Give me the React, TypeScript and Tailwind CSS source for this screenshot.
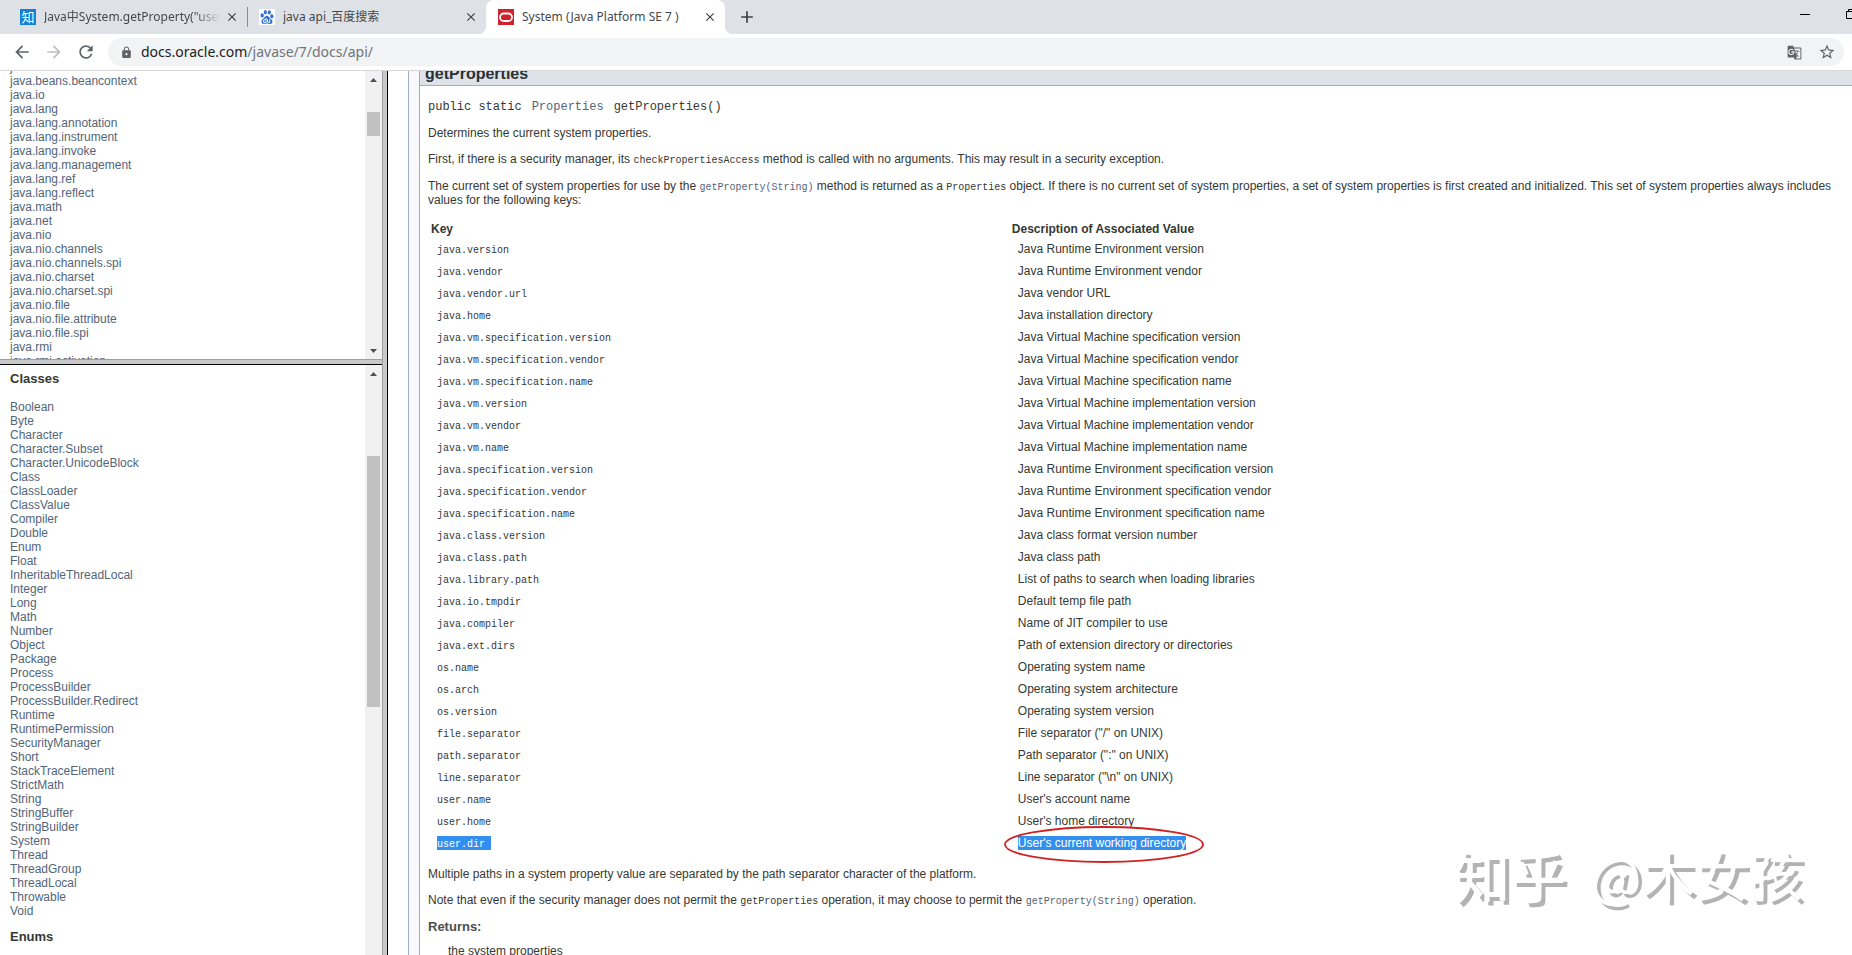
import React from 'react'
import { MdAdd, MdArrowBack, MdArrowForward, MdClose, MdGTranslate, MdLock, MdRefresh, MdStarBorder } from 'react-icons/md'
import { SiBaidu } from 'react-icons/si'

const packages = [
    'java.beans', 'java.beans.beancontext', 'java.io', 'java.lang', 'java.lang.annotation', 'java.lang.instrument',
    'java.lang.invoke', 'java.lang.management', 'java.lang.ref', 'java.lang.reflect', 'java.math', 'java.net',
    'java.nio', 'java.nio.channels', 'java.nio.channels.spi', 'java.nio.charset', 'java.nio.charset.spi',
    'java.nio.file', 'java.nio.file.attribute', 'java.nio.file.spi', 'java.rmi', 'java.rmi.activation',
]

const classes = [
    'Boolean', 'Byte', 'Character', 'Character.Subset', 'Character.UnicodeBlock', 'Class', 'ClassLoader', 'ClassValue',
    'Compiler', 'Double', 'Enum', 'Float', 'InheritableThreadLocal', 'Integer', 'Long', 'Math', 'Number', 'Object',
    'Package', 'Process', 'ProcessBuilder', 'ProcessBuilder.Redirect', 'Runtime', 'RuntimePermission',
    'SecurityManager', 'Short', 'StackTraceElement', 'StrictMath', 'String', 'StringBuffer', 'StringBuilder',
    'System', 'Thread', 'ThreadGroup', 'ThreadLocal', 'Throwable', 'Void',
]

const properties = [
    ['java.version', 'Java Runtime Environment version'],
    ['java.vendor', 'Java Runtime Environment vendor'],
    ['java.vendor.url', 'Java vendor URL'],
    ['java.home', 'Java installation directory'],
    ['java.vm.specification.version', 'Java Virtual Machine specification version'],
    ['java.vm.specification.vendor', 'Java Virtual Machine specification vendor'],
    ['java.vm.specification.name', 'Java Virtual Machine specification name'],
    ['java.vm.version', 'Java Virtual Machine implementation version'],
    ['java.vm.vendor', 'Java Virtual Machine implementation vendor'],
    ['java.vm.name', 'Java Virtual Machine implementation name'],
    ['java.specification.version', 'Java Runtime Environment specification version'],
    ['java.specification.vendor', 'Java Runtime Environment specification vendor'],
    ['java.specification.name', 'Java Runtime Environment specification name'],
    ['java.class.version', 'Java class format version number'],
    ['java.class.path', 'Java class path'],
    ['java.library.path', 'List of paths to search when loading libraries'],
    ['java.io.tmpdir', 'Default temp file path'],
    ['java.compiler', 'Name of JIT compiler to use'],
    ['java.ext.dirs', 'Path of extension directory or directories'],
    ['os.name', 'Operating system name'],
    ['os.arch', 'Operating system architecture'],
    ['os.version', 'Operating system version'],
    ['file.separator', 'File separator ("/" on UNIX)'],
    ['path.separator', 'Path separator (":" on UNIX)'],
    ['line.separator', 'Line separator ("\\n" on UNIX)'],
    ['user.name', "User's account name"],
    ['user.home', "User's home directory"],
]

const Code = ({ children }: { children: React.ReactNode }) => (
    <code className="font-['Liberation_Mono',monospace] text-[10px] leading-none">{children}</code>
)

const Tab = ({ icon, title, active }: { icon: React.ReactNode; title: string; active?: boolean }) => (
    <div className={active ? 'relative flex w-[239px] items-center rounded-t-lg bg-white pr-2 pl-3' : 'flex w-[239px] items-center pr-2 pl-3'}>
        {active && (
            <>
                <span className="absolute bottom-0 -left-2 size-2 bg-[radial-gradient(circle_at_0_0,#dee1e6_8px,white_8px)]" />
                <span className="absolute -right-2 bottom-0 size-2 bg-[radial-gradient(circle_at_100%_0,#dee1e6_8px,white_8px)]" />
            </>
        )}
        {icon}
        <a
            href="#"
            className={
                title.length > 26 && !active
                    ? 'ml-2 min-w-0 flex-1 overflow-hidden whitespace-nowrap [mask-image:linear-gradient(to_right,black_85%,transparent)]'
                    : 'ml-2 min-w-0 flex-1 overflow-hidden whitespace-nowrap'
            }
        >
            {title}
        </a>
        <button aria-label="Close tab" className="ml-1 text-[#3c4043]"><MdClose size={14} /></button>
    </div>
)

const Scrollbar = ({ thumb, down }: { thumb: string; down?: boolean }) => (
    <div className="flex w-[17px] shrink-0 flex-col items-center bg-[#f1f1f1]">
        <div className="flex h-[17px] shrink-0 items-center">
            <svg width="7" height="4" viewBox="0 0 7 4"><path d="M0 4 3.5 0 7 4z" fill="#505050" /></svg>
        </div>
        <div className={thumb} />
        {down && (
            <div className="mt-auto flex h-[17px] shrink-0 items-center">
                <svg width="7" height="4" viewBox="0 0 7 4"><path d="M0 0 3.5 4 7 0z" fill="#505050" /></svg>
            </div>
        )}
    </div>
)

const LinkList = ({ items }: { items: string[] }) => (
    <ul>
        {items.map((item) => (
            <li key={item}><a href="#" className="text-[#526579]">{item}</a></li>
        ))}
    </ul>
)

const Browser = () => (
    <header className="shrink-0 border-b border-[#d5d7da] bg-white font-['Noto_Sans','Noto_Sans_CJK_SC',sans-serif] text-[#45494d]">
        <div className="flex h-[34px] overflow-hidden bg-[#dee1e6] pl-2 text-xs">
            <Tab
                title={'Java中System.getProperty("user.dir")'}
                icon={<span className="flex size-4 shrink-0 items-center justify-center bg-[#1480d8] text-[13px] leading-4 text-white">知</span>}
            />
            <div className="my-auto -mr-px h-5 w-px bg-[#8a8d91]" />
            <Tab
                title="java api_百度搜索"
                icon={<span className="flex size-4 shrink-0 items-center justify-center bg-white text-[#2f6fd6]"><SiBaidu size={14} /></span>}
            />
            <Tab
                active
                title="System (Java Platform SE 7 )"
                icon={
                    <svg className="size-4 shrink-0" viewBox="0 0 16 16">
                        <path d="M0 0h16v16H0z" fill="#d3202f" />
                        <rect x="2" y="4.5" width="12" height="7.5" rx="3.75" fill="none" stroke="#fff" strokeWidth="1.8" />
                    </svg>
                }
            />
            <button aria-label="New tab" className="ml-3 text-[#3c4043]"><MdAdd size={20} /></button>
            <div className="ml-auto flex shrink-0">
                <button aria-label="Minimize" className="flex h-[29px] w-[46px] items-center text-black">
                    <svg width="10" height="1" viewBox="0 0 10 1"><path d="M0 0h10v1H0z" /></svg>
                </button>
                <button aria-label="Restore" className="flex h-[27px] w-[6px] items-center overflow-hidden">
                    <svg className="shrink-0" width="10" height="10" viewBox="0 0 10 10" fill="none" stroke="#000">
                        <path d="M.5 2.5h7v7h-7zM2.5 2.5v-2h7v7h-2" />
                    </svg>
                </button>
            </div>
        </div>
        <div className="flex h-9 items-center pr-2 pl-3 text-[#5f6368]">
            <button aria-label="Back" className="mr-3"><MdArrowBack size={20} /></button>
            <button aria-label="Forward" className="mr-3 text-[#bcbec1]"><MdArrowForward size={20} /></button>
            <button aria-label="Reload"><MdRefresh size={20} /></button>
            <div className="ml-3 flex h-7 flex-1 items-center rounded-full bg-[#f1f3f4] pr-2 pl-3">
                <MdLock size={13} className="mr-2" />
                <a href="#" className="text-sm text-[#70757a]"><span className="text-[#202124]">docs.oracle.com</span>/javase/7/docs/api/</a>
                <button aria-label="Translate" className="ml-auto"><MdGTranslate size={15} /></button>
                <button aria-label="Bookmark" className="ml-4"><MdStarBorder size={18} /></button>
            </div>
        </div>
    </header>
)

const Method = () => (
    <main className="min-w-0 flex-1 overflow-hidden pl-5">
        <div className="h-full border-l border-[#9eadc0] bg-[#f9f9fd] pl-[10px]">
            <div className="h-full border-l border-[#9eadc0] bg-white">
                <h4 className="flex h-[15px] items-end overflow-hidden border-b border-[#9eadc0] bg-[#dee3e9] pb-[2px] pl-[5px] text-base leading-[18px] font-bold text-[#2c3033]">
                    getProperties
                </h4>
                <div className="pl-2">
                    <pre className="mt-[13px] flex font-['Liberation_Mono',monospace] text-xs leading-4 text-[#353833]">
                        <span>public static</span>
                        <a href="#" className="mx-[10px] text-[#526579]">Properties</a>
                        <span>getProperties()</span>
                    </pre>
                    <p className="mt-[11px]">Determines the current system properties.</p>
                    <p className="mt-3">
                        First, if there is a security manager, its <Code>checkPropertiesAccess</Code> method is called with no arguments. This may result in a security exception.
                    </p>
                    <p className="mt-[13px]">
                        The current set of system properties for use by the <a href="#" className="text-[#526579]"><Code>getProperty(String)</Code></a> method is returned as a <Code>Properties</Code> object. If there is no current set of system properties, a set of system properties is first created and initialized. This set of system properties always includes values for the following keys:
                    </p>
                    <table className="mt-3 w-full table-fixed">
                        <thead>
                            <tr className="h-[19px] text-left">
                                <th className="w-[41%] pl-[3px]">Key</th>
                                <th>Description of Associated Value</th>
                            </tr>
                        </thead>
                        <tbody>
                            {properties.map(([key, text]) => (
                                <tr key={key} className="h-[22px]">
                                    <td className="pl-[9px]"><Code>{key}</Code></td>
                                    <td className="pl-[6px]">{text}</td>
                                </tr>
                            ))}
                            <tr className="h-[22px]">
                                <td className="pl-[9px]">
                                    <span className="inline-block bg-[#338fef] align-middle leading-[14px] whitespace-pre text-white"><Code>{'user.dir '}</Code></span>
                                </td>
                                <td className="pl-[6px]">
                                    <span className="relative inline-block bg-[#338fef] align-middle leading-[14px] text-white">
                                        User's current working directory
                                        <svg className="absolute -top-[10px] -left-[14px]" width="200" height="37" viewBox="0 0 200 37">
                                            <ellipse cx="100" cy="18.5" rx="99" ry="17.5" fill="none" stroke="#d02222" strokeWidth="1.8" />
                                        </svg>
                                    </span>
                                </td>
                            </tr>
                        </tbody>
                    </table>
                    <p className="mt-[13px]">Multiple paths in a system property value are separated by the path separator character of the platform.</p>
                    <p className="mt-3">
                        Note that even if the security manager does not permit the <Code>getProperties</Code> operation, it may choose to permit the <a href="#" className="text-[#526579]"><Code>getProperty(String)</Code></a> operation.
                    </p>
                    <dl className="mt-3">
                        <dt className="text-[13px] leading-4 font-bold text-[#4e4e4e]">Returns:</dt>
                        <dd className="mt-[9px] ml-5">the system properties</dd>
                    </dl>
                </div>
            </div>
        </div>
    </main>
)

export default function App() {
    return (
        <div className="relative flex h-screen flex-col overflow-hidden bg-white font-['Liberation_Sans',Arial,sans-serif] text-xs leading-[14px] text-[#353833]">
            <Browser />
            <div className="flex min-h-0 flex-1">
                <aside className="flex w-[382px] shrink-0 flex-col">
                    <nav className="flex h-[288px] shrink-0 overflow-hidden">
                        <div className="-mt-[11px] flex-1 pl-[10px]"><LinkList items={packages} /></div>
                        <Scrollbar down thumb="mt-6 h-6 w-[13px] bg-[#c1c1c1]" />
                    </nav>
                    <div className="h-[6px] shrink-0 border-t border-b border-t-[#a0a0a0] border-b-black bg-[#c8c8c8]" />
                    <nav className="flex min-h-0 flex-1 overflow-hidden">
                        <div className="flex-1 pt-[6px] pl-[10px]">
                            <h3 className="mb-[13px] text-[13px] leading-4 font-bold">Classes</h3>
                            <LinkList items={classes} />
                            <h3 className="mt-[11px] text-[13px] leading-4 font-bold">Enums</h3>
                        </div>
                        <Scrollbar thumb="mt-[74px] h-[251px] w-[13px] bg-[#c1c1c1]" />
                    </nav>
                </aside>
                <div className="w-[6px] shrink-0 border-r border-l border-r-black border-l-[#a0a0a0] bg-[#c8c8c8]" />
                <Method />
            </div>
            <div className="pointer-events-none absolute right-[49px] bottom-[45px] flex items-center gap-6 font-['Noto_Sans_CJK_SC',sans-serif] text-white [text-shadow:4px_4px_0_#b3b3b3]">
                <span className="text-[56px] leading-[72px] font-medium">知乎</span>
                <span className="text-[54px] leading-[72px]">@木女孩</span>
            </div>
        </div>
    )
}
